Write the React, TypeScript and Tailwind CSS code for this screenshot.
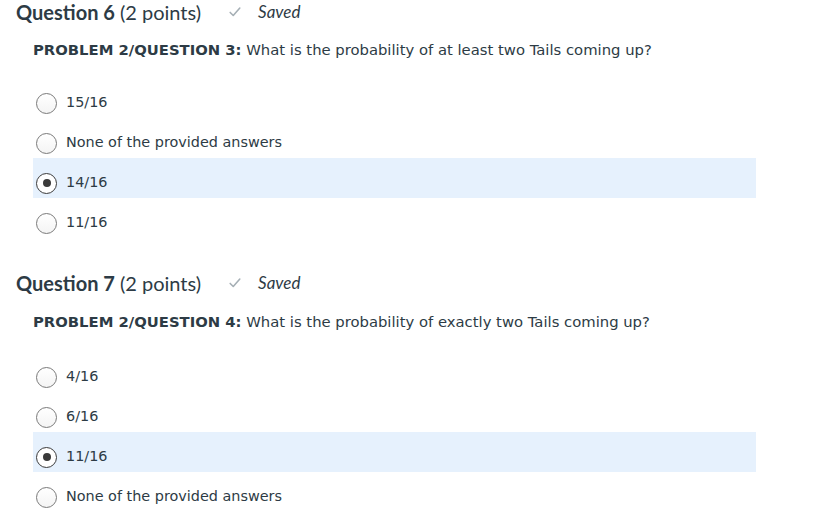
import React from "react";

type Q = {
  num: number;
  label: string;
  text: string;
  options: string[];
  selected: number;
  pClass: string;
  listClass: string;
};

const questions: Q[] = [
  {
    num: 6,
    label: "PROBLEM 2/QUESTION 3:",
    text: "What is the probability of at least two Tails coming up?",
    options: ["15/16", "None of the provided answers", "14/16", "11/16"],
    selected: 2,
    pClass: "mt-4",
    listClass: "mt-[18px]",
  },
  {
    num: 7,
    label: "PROBLEM 2/QUESTION 4:",
    text: "What is the probability of exactly two Tails coming up?",
    options: ["4/16", "6/16", "11/16", "None of the provided answers"],
    selected: 2,
    pClass: "mt-[17px]",
    listClass: "mt-[20px]",
  },
];

function Radio({ checked }: { checked: boolean }) {
  return (
    <span
      className={
        checked
          ? "flex h-[21px] w-[21px] shrink-0 items-center justify-center rounded-full border border-[#3a3a3a] bg-white"
          : "flex h-[21px] w-[21px] shrink-0 items-center justify-center rounded-full border border-[#7a7a7a] bg-gradient-to-b from-white to-[#f4f4f4]"
      }
    >
      {checked && <span className="h-[8px] w-[8px] rounded-full bg-[#3a3a3a]" />}
    </span>
  );
}

function Question({ q }: { q: Q }) {
  return (
    <section>
      <div className="flex h-6 items-center pl-4 font-['Lato',sans-serif] text-[#2d3b45]">
        <span className="text-[20px] font-bold">Question {q.num}</span>
        <span className="ml-[5px] text-[20px]">(2 points)</span>
        <svg viewBox="0 0 16 16" className="ml-[27px] h-[14px] w-[14px]" fill="none">
          <path d="M2.5 8.5 L6 12 L13.5 3.5" stroke="#a5afb5" strokeWidth="1.8" strokeLinecap="round" strokeLinejoin="round" />
        </svg>
        <span className="ml-[16px] text-[17px] italic">Saved</span>
      </div>
      <p className={`${q.pClass} pl-[33px] font-['DejaVu_Sans',sans-serif] text-[14.8px] leading-5 text-[#2d3b45]`}>
        <span className="font-bold">{q.label}</span> {q.text}
      </p>
      <div className={`${q.listClass} ml-[33px] w-[723px]`}>
        {q.options.map((o, i) => (
          <div
            key={o}
            className={
              i === q.selected
                ? "flex h-10 items-center gap-[9px] bg-[#e6f1fd] pl-[3px] pt-[10px]"
                : "flex h-10 items-center gap-[9px] pl-[3px] pt-[10px]"
            }
          >
            <Radio checked={i === q.selected} />
            <span className="font-['DejaVu_Sans',sans-serif] text-[14.4px] text-[#2d3b45]">{o}</span>
          </div>
        ))}
      </div>
    </section>
  );
}

export default function App() {
  return (
    <div className="h-[527px] w-[826px] overflow-hidden bg-white">
      <Question q={questions[0]} />
      <div className="h-[33px]" />
      <Question q={questions[1]} />
    </div>
  );
}
